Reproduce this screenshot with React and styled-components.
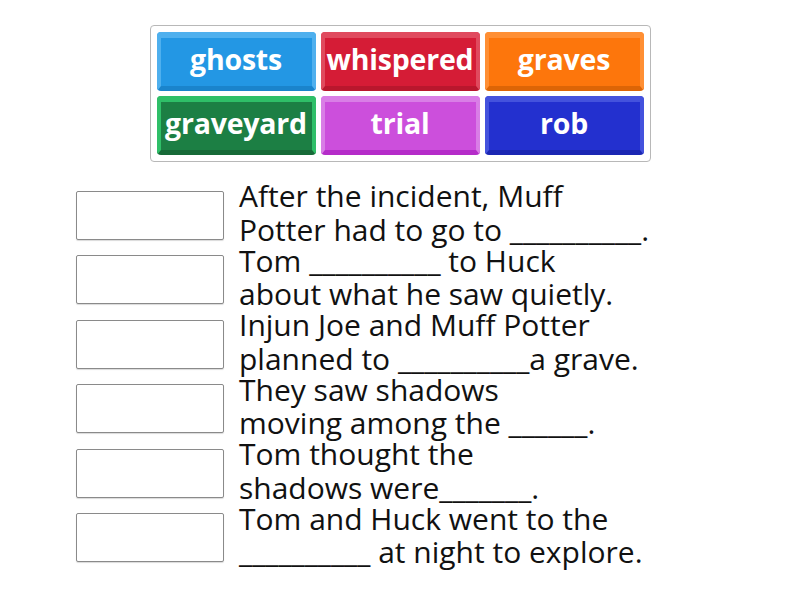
import React from 'react';
import styled, { createGlobalStyle } from 'styled-components';

const GlobalStyle = createGlobalStyle`
  body {
    margin: 0;
    background: #ffffff;
    font-family: "Open Sans", "Liberation Sans", sans-serif;
  }
`;

const Page = styled.div`
  width: 800px;
  height: 600px;
  display: flex;
  flex-direction: column;
  padding-top: 25px;
  box-sizing: border-box;
`;

const TileBank = styled.div`
  align-self: center;
  display: grid;
  grid-template-columns: repeat(3, 159px);
  gap: 5px;
  padding: 6px;
  border: 1px solid #b8b8b8;
  border-radius: 4px;
`;

const Tile = styled.div`
  height: 59px;
  box-sizing: border-box;
  display: flex;
  align-items: center;
  justify-content: center;
  border-radius: 4px;
  background: ${(p) => p.$face};
  border-top: 6px solid ${(p) => p.$light};
  border-left: 4px solid ${(p) => p.$light};
  border-right: 4px solid ${(p) => p.$light};
  border-bottom: 5px solid ${(p) => p.$dark};
  color: #ffffff;
  font-weight: 700;
  font-size: 28.5px;
  line-height: 1;
  padding-bottom: 6px;
  white-space: nowrap;
  letter-spacing: -0.2px;
`;

const List = styled.div`
  margin-top: 21px;
  padding-left: 76px;
  display: flex;
  flex-direction: column;
`;

const Row = styled.div`
  height: 64.5px;
  display: flex;
  align-items: center;
  gap: 15px;
`;

const DropBox = styled.div`
  width: 148px;
  height: 49px;
  box-sizing: border-box;
  flex-shrink: 0;
  border: 1px solid #8a8a8a;
  border-radius: 2px;
  box-shadow: 0 1px 1px rgba(0, 0, 0, 0.15);
  background: #ffffff;
`;

const Prompt = styled.div`
  font-size: 30px;
  line-height: 33.5px;
  color: #111111;
  white-space: nowrap;
  margin-top: -5px;
`;

const tiles = [
  { text: 'ghosts', face: '#2397e4', light: '#4fb0ee', dark: '#1a84cc' },
  { text: 'whispered', face: '#d51c36', light: '#e04a5e', dark: '#b9172d' },
  { text: 'graves', face: '#fd760c', light: '#ff8f34', dark: '#dd6506' },
  { text: 'graveyard', face: '#1c7f44', light: '#2fbf68', dark: '#176a38' },
  { text: 'trial', face: '#cc4fdc', light: '#d97ee6', dark: '#b52cc9' },
  { text: 'rob', face: '#2330cf', light: '#4452dd', dark: '#1b27b3' },
];

const prompts = [
  ['After the incident, Muff', 'Potter had to go to __________.'],
  ['Tom __________ to Huck', 'about what he saw quietly.'],
  ['Injun Joe and Muff Potter', 'planned to __________a grave.'],
  ['They saw shadows', 'moving among the ______.'],
  ['Tom thought the', 'shadows were_______.'],
  ['Tom and Huck went to the', '__________ at night to explore.'],
];

const App = () => (
  <>
    <GlobalStyle />
    <Page>
      <TileBank>
        {tiles.map((t) => (
          <Tile key={t.text} $face={t.face} $light={t.light} $dark={t.dark}>
            {t.text}
          </Tile>
        ))}
      </TileBank>
      <List>
        {prompts.map((lines, i) => (
          <Row key={i}>
            <DropBox />
            <Prompt>
              {lines[0]}
              <br />
              {lines[1]}
            </Prompt>
          </Row>
        ))}
      </List>
    </Page>
  </>
);

export default App;
